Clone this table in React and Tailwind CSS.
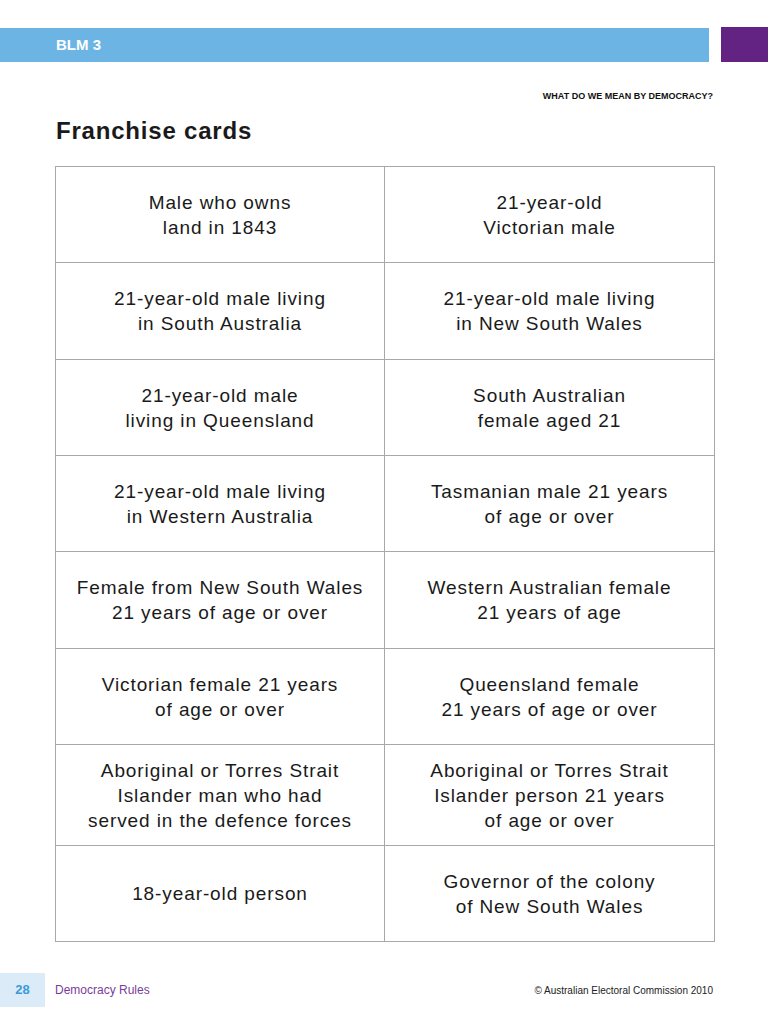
const cards = [
    ["Male who owns\nland in 1843", "21-year-old\nVictorian male", "h-[96px]"],
    ["21-year-old male living\nin South Australia", "21-year-old male living\nin New South Wales", "h-[97px]"],
    ["21-year-old male\nliving in Queensland", "South Australian\nfemale aged 21", "h-[96px]"],
    ["21-year-old male living\nin Western Australia", "Tasmanian male 21 years\nof age or over", "h-[96px]"],
    ["Female from New South Wales\n21 years of age or over", "Western Australian female\n21 years of age", "h-[97px]"],
    ["Victorian female 21 years\nof age or over", "Queensland female\n21 years of age or over", "h-[96px]"],
    ["Aboriginal or Torres Strait\nIslander man who had\nserved in the defence forces", "Aboriginal or Torres Strait\nIslander person 21 years\nof age or over", "h-[101px]"],
    ["18-year-old person", "Governor of the colony\nof New South Wales", "h-[96px]"],
];

const Card = ({ text, height }) => (
    <div className={`${height} flex items-center justify-center border-r border-b border-[#a8a8a8] text-center text-[19px] tracking-[0.9px] leading-[25px] text-[#1a1a1a] whitespace-pre-line`}>
        {text}
    </div>
);

const App = () => {
    return (
        <div className="relative w-[768px] h-[1024px] bg-white font-['Liberation_Sans',Arial,sans-serif] overflow-hidden">
            <div className="pt-[27px] flex items-stretch gap-[12px]">
                <div className="w-[709px] h-[34px] mt-[1px] bg-[#6cb4e4] flex items-center pl-[56px]">
                    <span className="text-white font-bold text-[15px]">BLM 3</span>
                </div>
                <div className="flex-1 h-[35px] bg-[#622382]"></div>
            </div>

            <div className="pr-[55px] mt-[29px] text-right text-[9px] font-bold text-[#111] leading-[10px]">
                WHAT DO WE MEAN BY DEMOCRACY?
            </div>

            <h1 className="ml-[56px] mt-[16px] text-[24px] tracking-[0.8px] font-bold leading-[28px] text-[#1a1a1a]">Franchise cards</h1>

            <div className="ml-[55px] mt-[21px] w-[660px] grid grid-cols-[329px_330px] border-l border-t border-[#a8a8a8]">
                {cards.map(([left, right, h], i) => (
                    <div key={i} className="contents">
                        <Card text={left} height={h} />
                        <Card text={right} height={h} />
                    </div>
                ))}
            </div>

            <div className="mt-[31px] flex items-center">
                <div className="w-[45px] h-[34px] bg-[#dcebf8] flex items-center justify-center text-[#3a9ad9] font-bold text-[13px]">28</div>
                <span className="ml-[10px] text-[#7a3c9a] text-[12px]">Democracy Rules</span>
                <span className="ml-auto mr-[55px] text-[#222] text-[10px]">© Australian Electoral Commission 2010</span>
            </div>
        </div>
    );
};

export default App;
